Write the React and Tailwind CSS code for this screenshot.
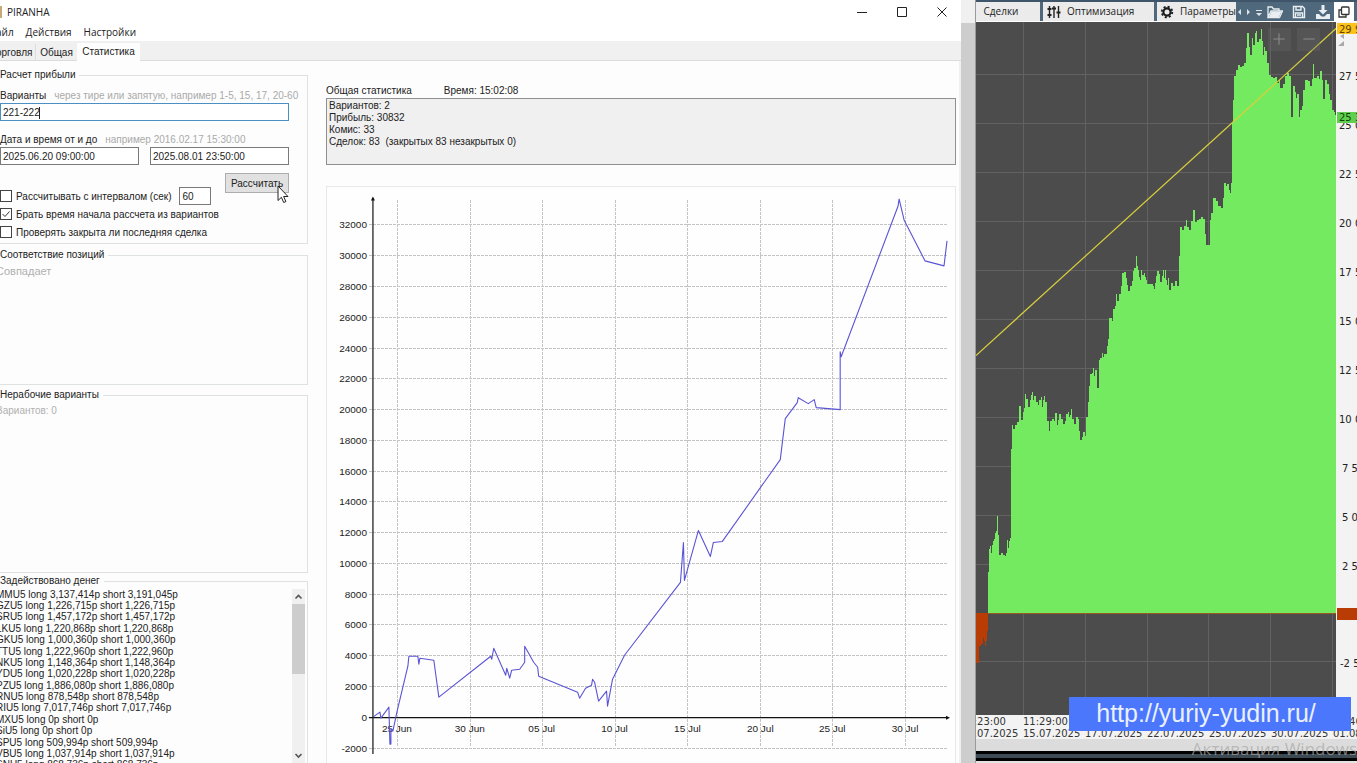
import React, { useState } from 'react';
import { LuMinus, LuPlus } from 'react-icons/lu';

const positions = [
  ['MMU5', '3,137,414', '3,191,045'],
  ['GZU5', '1,226,715', '1,226,715'],
  ['SRU5', '1,457,172', '1,457,172'],
  ['LKU5', '1,220,868', '1,220,868'],
  ['GKU5', '1,000,360', '1,000,360'],
  ['TTU5', '1,222,960', '1,222,960'],
  ['NKU5', '1,148,364', '1,148,364'],
  ['YDU5', '1,020,228', '1,020,228'],
  ['PZU5', '1,886,080', '1,886,080'],
  ['RNU5', '878,548', '878,548'],
  ['RIU5', '7,017,746', '7,017,746'],
  ['MXU5', '0', '0'],
  ['SiU5', '0', '0'],
  ['SPU5', '509,994', '509,994'],
  ['VBU5', '1,037,914', '1,037,914'],
  ['SNU5', '868,736', '868,736'],
];

const summary = 'Вариантов: 2\nПрибыль: 30832\nКомис: 33\nСделок: 83  (закрытых 83 незакрытых 0)';

// ── Profit curve ──

const profitTicks = Array.from({ length: 18 }, (_, i) => (i - 1) * 2000);
const profitY = (value) => 718 - Math.round((value / 2000) * 30.87);

const profitDays = [
  { x: 397, label: '25 Jun' },
  { x: 470, label: '30 Jun' },
  { x: 542, label: '05 Jul' },
  { x: 615, label: '10 Jul' },
  { x: 688, label: '15 Jul' },
  { x: 761, label: '20 Jul' },
  { x: 833, label: '25 Jul' },
  { x: 906, label: '30 Jul' },
];

const profitLine =
  '373,718 380,713 381,719 389,708 390,745 391,745 391,730 393,732 397,713 408,667 409,657 418,657 419,665 420,659 434,661 439,698 ' +
  '491,657 492,660 494,649 506,676 507,669 510,679 512,671 520,670 525,663 525,647 534,663 538,668 539,677 578,693 580,699 586,689 ' +
  '592,686 593,680 595,683 599,702 607,692 608,707 613,680 625,656 681,583 684,543 685,581 699,531 711,557 714,543 723,542 781,460 ' +
  '786,419 798,403 799,398 809,404 815,400 817,408 841,410 841,352 842,357 899,206 900,199 905,220 926,261 945,266 948,241';

// ── Equity area: x and top of every step, down to the zero line ──

const equitySteps = [
  [988, 572], [989, 549], [990, 546], [991, 553], [992, 545], [993, 541], [994, 539], [995, 533], [996, 531], [997, 516], [998, 535],
  [999, 555], [1001, 553], [1003, 555], [1005, 556], [1006, 553], [1007, 540], [1008, 548], [1009, 541], [1010, 538], [1011, 449], [1012, 425],
  [1013, 429], [1015, 425], [1017, 422], [1019, 406], [1021, 420], [1023, 412], [1024, 408], [1025, 394], [1026, 399], [1028, 407],
  [1030, 400], [1031, 395], [1032, 392], [1033, 400], [1034, 396], [1036, 402], [1038, 405], [1039, 400], [1041, 397], [1042, 407],
  [1043, 400], [1044, 396], [1045, 402], [1047, 421], [1049, 431], [1050, 421], [1052, 419], [1054, 421], [1055, 413], [1057, 425],
  [1058, 420], [1059, 414], [1061, 419], [1063, 424], [1065, 421], [1066, 414], [1068, 412], [1069, 417], [1070, 415], [1071, 409],
  [1072, 419], [1074, 424], [1076, 417], [1078, 419], [1079, 431], [1080, 440], [1082, 437], [1083, 432], [1085, 436], [1086, 417],
  [1088, 402], [1089, 386], [1090, 374], [1092, 373], [1093, 368], [1094, 376], [1095, 370], [1097, 388], [1099, 360], [1100, 358],
  [1102, 353], [1103, 357], [1104, 354], [1107, 346], [1108, 339], [1109, 318], [1112, 321], [1113, 309], [1115, 306], [1116, 294],
  [1117, 301], [1119, 294], [1121, 286], [1122, 273], [1124, 272], [1126, 278], [1127, 285], [1128, 291], [1130, 286], [1132, 281],
  [1133, 271], [1134, 268], [1136, 256], [1137, 266], [1138, 270], [1139, 277], [1140, 280], [1141, 270], [1142, 275], [1144, 273],
  [1145, 277], [1146, 280], [1147, 284], [1153, 286], [1154, 289], [1155, 283], [1156, 276], [1157, 271], [1159, 274], [1160, 282],
  [1162, 276], [1163, 270], [1164, 278], [1165, 270], [1166, 280], [1167, 285], [1168, 278], [1169, 290], [1171, 283], [1173, 286],
  [1175, 281], [1177, 286], [1179, 256], [1180, 227], [1182, 230], [1184, 226], [1186, 220], [1187, 227], [1189, 230], [1191, 221],
  [1193, 210], [1195, 222], [1197, 220], [1199, 219], [1201, 217], [1203, 219], [1205, 234], [1206, 245], [1210, 220], [1211, 213],
  [1213, 198], [1216, 201], [1218, 206], [1221, 208], [1223, 198], [1224, 183], [1226, 186], [1227, 184], [1229, 190], [1230, 193],
  [1231, 183], [1232, 122], [1233, 100], [1234, 76], [1236, 70], [1238, 65], [1240, 67], [1242, 66], [1244, 63], [1246, 48],
  [1247, 33], [1249, 47], [1250, 55], [1252, 38], [1253, 45], [1255, 33], [1256, 31], [1257, 42], [1259, 39], [1261, 29],
  [1262, 41], [1263, 55], [1264, 47], [1265, 51], [1267, 63], [1269, 75], [1271, 77], [1273, 78], [1275, 77], [1277, 83],
  [1279, 80], [1280, 88], [1283, 84], [1285, 76], [1287, 73], [1289, 76], [1291, 117], [1293, 86], [1295, 92], [1296, 98],
  [1297, 94], [1299, 117], [1300, 110], [1302, 106], [1303, 90], [1305, 80], [1308, 81], [1310, 86], [1312, 79], [1313, 64],
  [1314, 78], [1317, 76], [1319, 79], [1320, 71], [1322, 80], [1323, 99], [1325, 80], [1327, 84], [1329, 94], [1330, 100],
  [1332, 110], [1334, 112], [1335, 115],
];

const equityPath = `M988 613${equitySteps.map(([x, y]) => `H${x}V${y}`).join('')}H1336V613Z`;

const equityTicks = [
  { y: 75, label: '27 500' },
  { y: 124, label: '25 000' },
  { y: 173, label: '22 500' },
  { y: 222, label: '20 000' },
  { y: 271, label: '17 500' },
  { y: 320, label: '15 000' },
  { y: 369, label: '12 500' },
  { y: 418, label: '10 000' },
  { y: 467, label: '7 500' },
  { y: 516, label: '5 000' },
  { y: 565, label: '2 500' },
  { y: 662, label: '-2 500' },
];

const equityDays = [
  { x: 960, time: '14:23:00', date: '11.07.2025' },
  { x: 1023, time: '11:29:00', date: '15.07.2025' },
  { x: 1085, date: '17.07.2025' },
  { x: 1147, date: '22.07.2025' },
  { x: 1208, date: '25.07.2025' },
  { x: 1270, date: '30.07.2025' },
  { x: 1332, time: '09:46:00', date: '01.08.2025' },
];

// ── Form pieces ──

const TextBox = ({ className = '', ...props }) => (
  <input
    type="text"
    className={`h-[18px] min-w-0 border bg-white px-0.5 text-[10px] text-[#222] outline-none ${className}`}
    {...props}
  />
);

const CheckRow = ({ id, label, checked, onChange, children }) => (
  <div className="flex h-[18px] items-center">
    <span className="relative mr-1 flex h-3 w-3 shrink-0">
      <input
        id={id}
        type="checkbox"
        checked={checked}
        onChange={onChange}
        className="h-3 w-3 appearance-none border border-[#444] bg-white"
      />
      {checked && (
        <svg viewBox="0 0 12 12" className="pointer-events-none absolute inset-0 h-3 w-3" fill="none" stroke="#333">
          <path d="M2.5 6l2.5 2.5L9.5 3.5" />
        </svg>
      )}
    </span>
    <label htmlFor={id} className="whitespace-nowrap">{label}</label>
    {children}
  </div>
);

const Group = ({ title, className = '', children }) => (
  <fieldset className={`min-w-0 border border-[#dfe2e2] pl-2 ${className}`}>
    <legend className="h-3 pr-1 leading-3">{title}</legend>
    {children}
  </fieldset>
);

const ProfitForm = () => {
  const [checks, setChecks] = useState({ interval: false, fromVariants: true, closed: false });
  const toggle = (key) => () => setChecks((prev) => ({ ...prev, [key]: !prev[key] }));

  return (
    <Group title="Расчет прибыли" className="shrink-0 pr-[18px] pb-0.5">
      <div className="mt-2 flex h-3 items-center gap-2">
        <label htmlFor="variants">Варианты</label>
        <span className="whitespace-nowrap text-[#aaa]">через тире или запятую, например 1-5, 15, 17, 20-60</span>
      </div>
      <div className="relative mt-0.5 flex">
        <TextBox id="variants" defaultValue="221-222" className="w-full border-[#4a90c2]" />
        <span className="absolute top-1 left-[39px] h-3 w-px bg-[#222]" />
      </div>

      <div className="mt-3 flex h-3 items-center gap-2">
        <label htmlFor="from">Дата и время от и до</label>
        <span className="text-[#aaa]">например 2016.02.17 15:30:00</span>
      </div>
      <div className="mt-0.5 flex gap-[11px]">
        <TextBox id="from" defaultValue="2025.06.20 09:00:00" className="flex-1 border-[#7a7a7a]" />
        <TextBox aria-label="Дата и время до" defaultValue="2025.08.01 23:50:00" className="flex-1 border-[#7a7a7a]" />
      </div>

      <div className="flex items-start justify-between">
        <div className="pt-[22px]">
          <CheckRow id="interval" label="Рассчитывать с интервалом (сек)" checked={checks.interval} onChange={toggle('interval')}>
            <TextBox aria-label="Интервал, сек" defaultValue="60" className="ml-2 w-8 border-[#7a7a7a]" />
          </CheckRow>
          <CheckRow id="fromVariants" label="Брать время начала рассчета из вариантов" checked={checks.fromVariants} onChange={toggle('fromVariants')} />
          <CheckRow id="closed" label="Проверять закрыта ли последняя сделка" checked={checks.closed} onChange={toggle('closed')} />
        </div>
        <div className="relative mt-2 -ml-20 flex">
          <button className="h-5 w-16 border border-[#adadad] bg-[#e1e1e1] whitespace-nowrap">Рассчитать</button>
          <svg viewBox="0 0 12 19" className="pointer-events-none absolute top-3 left-[52px] h-[19px] w-3">
            <path d="M1 1v14.5l3.4-3.2 2.3 5.2 2.2-1-2.3-5H11z" fill="#fff" stroke="#222" />
          </svg>
        </div>
      </div>
    </Group>
  );
};

const MoneyList = () => (
  <Group title="Задействовано денег" className="h-[196px] shrink-0 pr-0.5">
    <div className="mt-0.5 flex">
      <ul className="-ml-1 flex h-[182px] flex-1 flex-col whitespace-nowrap">
        {positions.map(([code, long, short]) => (
          <li key={code} className="flex flex-1 items-center leading-none">
            {code} long {long}p short {short}p
          </li>
        ))}
      </ul>
      <div className="flex h-[174px] w-[13px] flex-col items-center bg-[#f0f0f0]">
        <svg viewBox="0 0 13 15" className="h-[15px] w-[13px]" fill="none" stroke="#555" strokeWidth="1.6">
          <path d="M3.5 9.5l3-3 3 3" />
        </svg>
        <div className="h-[70px] w-full bg-[#cdcdcd]" />
        <svg viewBox="0 0 13 15" className="mt-auto h-[15px] w-[13px]" fill="none" stroke="#555" strokeWidth="1.6">
          <path d="M3.5 6l3 3 3-3" />
        </svg>
      </div>
    </div>
  </Group>
);

const ProfitChart = () => (
  <svg viewBox="327 187 629 576" className="block w-full" fontFamily="Liberation Sans, Arial, sans-serif" fontSize="10" fill="#222">
    <g stroke="#c4c4c4" strokeDasharray="3 1" shapeRendering="crispEdges">
      {profitTicks.map((v) => (
        <line key={v} x1="369" x2="949" y1={profitY(v) + 0.5} y2={profitY(v) + 0.5} />
      ))}
      {profitDays.map(({ x }) => (
        <line key={x} x1={x + 0.5} x2={x + 0.5} y1="200" y2="748" />
      ))}
    </g>
    <g textAnchor="end">
      {profitTicks.map((v) => (
        <text key={v} x="367" y={profitY(v) + 4}>{v}</text>
      ))}
    </g>
    <g textAnchor="middle">
      {profitDays.map(({ x, label }) => (
        <text key={x} x={x} y="733">{label}</text>
      ))}
    </g>
    <path d="M373 198V755" stroke="#333" strokeWidth="1.4" />
    <path d="M369 718.5H948" stroke="#111" strokeWidth="1.2" />
    <path d="M373 196.500l2 4h-4zM951 718.500l-4 2v-4z" fill="#111" />
    <polyline points={profitLine} fill="none" stroke="#5a54d4" strokeWidth="1.1" strokeLinejoin="round" />
  </svg>
);

// ── Left window ──

const StatsWindow = () => (
  <section className="-ml-3 flex min-w-0 flex-1 flex-col bg-[#fdfdfd] font-['Liberation_Sans',Arial,sans-serif] text-[10px] text-[#222]">
    <header className="flex h-6 shrink-0 items-center bg-white font-['Open_Sans',sans-serif] text-[10px]">
      <span className="mr-[5px] h-3 w-3.5 bg-[#c9a878]" />
      <h1>PIRANHA</h1>
      <div className="ml-auto flex gap-[30px] pr-3.5">
        <button aria-label="Свернуть" className="h-2.5 w-2.5">
          <svg viewBox="0 0 10 10" stroke="#222"><path d="M0 5.500h10" /></svg>
        </button>
        <button aria-label="Развернуть" className="h-2.5 w-2.5">
          <svg viewBox="0 0 10 10" fill="none" stroke="#222"><path d="M.5.5h9v9h-9z" /></svg>
        </button>
        <button aria-label="Закрыть" className="h-2.5 w-2.5">
          <svg viewBox="0 0 10 10" stroke="#222"><path d="M.5.500l9 9M9.500.500l-9 9" /></svg>
        </button>
      </div>
    </header>

    <nav className="flex h-[17px] shrink-0 items-center gap-3 bg-white font-['Open_Sans',sans-serif] text-[10px]">
      <button>Файл</button>
      <button>Действия</button>
      <button>Настройки</button>
    </nav>

    <div className="flex h-5 shrink-0 items-end border-b border-[#dcdcdc] bg-[#f0f0f0] whitespace-nowrap">
      <button className="h-4 w-12 border-r border-[#dcdcdc]">Торговля</button>
      <button className="h-4 w-[41px]">Общая</button>
      <button className="-mb-px h-[18px] w-[63px] bg-[#fdfdfd] pb-0.5">Статистика</button>
    </div>

    <main className="flex min-h-0 flex-1 gap-[18px] overflow-hidden border-r-2 border-[#f0f0f0] pr-[3px] pl-[3px]">
      <div className="flex w-[317px] shrink-0 flex-col pt-2">
        <ProfitForm />
        <Group title="Соответствие позиций" className="mt-[5px] h-[136px] shrink-0">
          <p className="-ml-1 mt-0.5 text-[11px] text-[#b0b0b0]">Совпадает</p>
        </Group>
        <Group title="Нерабочие варианты" className="mt-1 h-[184px] shrink-0">
          <p className="-ml-1 mt-0.5 text-[#b0b0b0]">Вариантов: 0</p>
        </Group>
        <div className="h-0.5 shrink-0" />
        <MoneyList />
      </div>

      <div className="flex min-w-0 flex-1 flex-col pt-[23px]">
        <div className="flex h-3 items-center gap-8">
          <label htmlFor="summary">Общая статистика</label>
          <span>Время: 15:02:08</span>
        </div>
        <textarea
          id="summary"
          readOnly
          value={summary}
          className="mt-0.5 h-[67px] shrink-0 resize-none border border-[#909090] bg-[#f0f0f0] px-0.5 pt-px leading-3 outline-none"
        />
        <div className="mt-[21px] min-h-0 flex-1 overflow-hidden border border-b-0 border-[#e8e8e8] bg-[#fefefe]">
          <ProfitChart />
        </div>
      </div>
    </main>
  </section>
);

// ── Right window ──

const SlidersIcon = () => (
  <svg viewBox="0 0 14 14" className="h-3.5 w-3.5" fill="none" stroke="#222" strokeWidth="1.4">
    <path d="M2.500 1v12M7 1v12M11.500 1v12" />
    <path d="M.5 10h4M5 3.500h4M9.500 7.500h4M.5 4h4" strokeWidth="1.8" />
  </svg>
);

const GearIcon = () => (
  <svg viewBox="0 0 14 14" className="h-3.5 w-3.5" fill="none" stroke="#1c1c1c">
    <circle cx="7" cy="7" r="3.600" strokeWidth="2.200" />
    <circle cx="7" cy="7" r="5.300" strokeWidth="1.800" strokeDasharray="2.080 2.080" />
  </svg>
);

const Toolbar = () => (
  <header className="flex h-[22px] shrink-0 items-stretch border-t-2 border-b border-t-[#3f556a] border-b-white bg-[#4f687c] text-[10px] text-[#222]">
    <button className="w-16 bg-[#ebebeb] pr-3.5 text-center">Сделки</button>
    <button className="ml-[3px] flex w-[111px] items-center gap-1.5 bg-[#ebebeb] pl-1">
      <SlidersIcon /> Оптимизация
    </button>
    <button className="ml-[3px] flex w-[79px] items-center gap-1.5 overflow-hidden bg-[#ebebeb] pl-[3px]">
      <GearIcon /> Параметры
    </button>
    <div className="flex flex-1 items-center text-white">
      <svg viewBox="0 0 26 10" className="ml-px h-2.5 w-[26px] shrink-0" fill="#dce4ea">
        <path d="M4 2v6L1 5zM10 2v6l3-3zM19 3h6v1h-6zM19 6h6l-3 3z" />
      </svg>
      <button aria-label="Открыть" className="ml-1 h-4 w-4">
        <svg viewBox="0 0 16 16" fill="none" stroke="#e8eef2" strokeWidth="1.300">
          <path d="M1 13.500V3h4l1.500 2H12v2M1 13.500L4 7h11.500l-3 6.500z" />
          <path d="M4.500 7.500h10l-2.500 5.500H2z" fill="#e8eef2" stroke="none" />
        </svg>
      </button>
      <button aria-label="Сохранить" className="ml-2 h-4 w-4">
        <svg viewBox="0 0 16 16" fill="none" stroke="#e8eef2" strokeWidth="1.400">
          <path d="M2.500 2.500h9l2 2v9h-11zM5 2.500v3.500h5V2.500M4.500 13.500V9h7v4.500M6 11h4" />
        </svg>
      </button>
      <button aria-label="Загрузить" className="ml-2 h-4 w-4">
        <svg viewBox="0 0 16 16" fill="#e8eef2">
          <path d="M6.500 1h3v5h3L8 10.500 3.500 6h3zM1 10h3l2.500 2.500h3L12 10h3v5H1z" />
        </svg>
      </button>
    </div>
    <button aria-label="Окна" className="flex w-5 items-center justify-center bg-white">
      <svg viewBox="0 0 12 12" className="h-3 w-3" fill="none" stroke="#333" strokeWidth="1.300">
        <rect x="3.500" y="1" width="7.500" height="7.500" rx="1" />
        <path d="M3.500 4H1v7h7V8.500" />
      </svg>
    </button>
    <div className="w-[3px]" />
  </header>
);

const EquityChart = () => (
  <svg viewBox="976 22 381 693" className="block w-full" fontFamily="DejaVu Sans, Verdana, sans-serif" fontSize="10" fill="#222">
    <rect x="976" y="22" width="360" height="693" fill="#4c4c4c" />
    <g stroke="#626262">
      {equityDays.slice(1).map(({ x }) => (
        <line key={x} x1={x + 0.5} x2={x + 0.5} y1="22" y2="715" />
      ))}
      {equityTicks.map(({ y }) => (
        <line key={y} x1="976" x2="1336" y1={y - 0.5} y2={y - 0.5} />
      ))}
    </g>
    <path d={equityPath} fill="#74ea60" shapeRendering="crispEdges" />
    <path d="M976 613h12v18h-1v10h-1v5h-1v-5h-1v-3h-1v6h-2v2h-2v17h-3z" fill="#b83c04" />
    <path d="M988 613.500H1336" stroke="#9a5a22" />
    <path d="M976 355.500L1336 28.500" stroke="#d9cf3c" strokeWidth="1.200" />
    <g fill="#666" fillOpacity=".35">
      <rect x="1268" y="28" width="23" height="23" />
      <rect x="1297" y="28" width="23" height="23" />
    </g>
    <rect x="1336" y="22" width="21" height="693" fill="#f3f3f3" />
    {equityTicks.map(({ y, label }) => (
      <text key={y} x={y === 662 ? 1340 : y > 450 ? 1342 : 1339} y={y + 5}>{label}</text>
    ))}
    <rect x="1337" y="23" width="20" height="11" fill="#fcc419" />
    <text x="1339" y="33" fill="#5c4300">29 951</text>
    <rect x="1337" y="112" width="20" height="11" fill="#5fd04e" />
    <text x="1339" y="121" fill="#14450e">25 376</text>
    <rect x="1337" y="608" width="20" height="12" fill="#b83c04" />
    <path d="M1344 34l-4 2 4 3zM1338 46l6-5v5z" fill="#a9a9a9" />
  </svg>
);

const TerminalWindow = () => (
  <section className="relative flex w-[382px] shrink-0 flex-col overflow-hidden border-l border-[#9a9a9a] bg-[#dcdcdc] font-['Open_Sans',sans-serif]">
    <Toolbar />
    <div className="relative shrink-0">
      <EquityChart />
      <div className="absolute top-2 right-[39px] flex gap-3 text-[#8a8a8a]">
        <button aria-label="Увеличить"><LuPlus size={18} strokeWidth={1.5} /></button>
        <button aria-label="Уменьшить"><LuMinus size={18} strokeWidth={1.5} /></button>
      </div>
    </div>
    <div className="flex h-6 shrink-0 bg-[#f3f3f3] pt-px font-['DejaVu_Sans',Verdana,sans-serif] text-[10px] leading-3 text-[#333]">
      <div className="-ml-[15px] flex">
        {equityDays.map(({ x, time, date }) => (
          <div key={x} className="w-[62px] shrink-0 whitespace-nowrap">
            <div className="h-3">{time}</div>
            <div className="h-[11px]">{date}</div>
          </div>
        ))}
      </div>
    </div>
    <div className="h-3 shrink-0" />
    <div className="h-2.5 shrink-0 border-y-[3px] border-black bg-[#3c4a54]" />
    <div className="flex-1 bg-[#e4e4e4]" />

    <p className="absolute right-0 bottom-1 text-[17px] leading-5 whitespace-nowrap text-[#a8a8a8]/70">Активация Windows</p>
    <a
      href="http://yuriy-yudin.ru/"
      className="absolute right-1.5 bottom-8 flex h-[34px] w-[282px] items-center justify-center bg-[#4b77fc] pr-2 font-['Liberation_Sans',Arial,sans-serif] text-[25px] text-[#eaf0ff]"
    >
      http://yuriy-yudin.ru/
    </a>
  </section>
);

const App = () => (
  <div className="flex h-screen overflow-hidden bg-white">
    <StatsWindow />
    <div className="w-3.5 shrink-0 border-t-[23px] border-t-[#f0f0f0] bg-[#cdcdcd]" />
    <TerminalWindow />
  </div>
);

export default App;
